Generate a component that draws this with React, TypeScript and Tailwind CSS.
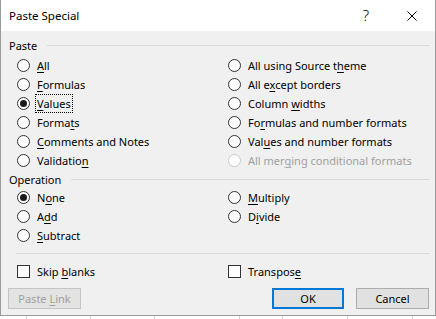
import React from "react";

type Row = { pre: string; key: string; post: string; checked?: boolean; disabled?: boolean; focus?: boolean };

function Label({ pre, k, post }: { pre: string; k: string; post: string }) {
  return (
    <span className="whitespace-pre">
      {pre}
      <span className="underline decoration-1 underline-offset-[2px]">{k}</span>
      {post}
    </span>
  );
}

function Radio({ row }: { row: Row }) {
  return (
    <div className="flex items-center h-[19px]">
      <span
        className={`w-[13px] h-[13px] rounded-full border bg-white flex items-center justify-center shrink-0 ${
          row.disabled ? "border-[#cccccc]" : "border-[#333333]"
        }`}
      >
        {row.checked && <span className="w-[7px] h-[7px] rounded-full bg-[#1a1a1a]" />}
      </span>
      <span className={`ml-[7px] whitespace-nowrap ${row.disabled ? "text-[#a0a0a0]" : "text-black"}`}>
        {row.focus ? (
          <span className="outline-1 outline-dotted outline-black outline-offset-[1px]">
            <Label pre={row.pre} k={row.key} post={row.post} />
          </span>
        ) : (
          <Label pre={row.pre} k={row.key} post={row.post} />
        )}
      </span>
    </div>
  );
}

function Check({ pre, k, post }: { pre: string; k: string; post: string }) {
  return (
    <div className="flex items-center h-[19px]">
      <span className="w-[13px] h-[13px] border border-[#333333] bg-white shrink-0" />
      <span className="ml-[7px] whitespace-nowrap">
        <Label pre={pre} k={k} post={post} />
      </span>
    </div>
  );
}

function GroupHeader({ title, h }: { title: string; h: string }) {
  return (
    <div className={`flex items-center ${h}`}>
      <span>{title}</span>
      <span className="flex-1 ml-[10px] h-px bg-[#d9d9d9]" />
    </div>
  );
}

const pasteLeft: Row[] = [
  { pre: "", key: "A", post: "ll" },
  { pre: "", key: "F", post: "ormulas" },
  { pre: "", key: "V", post: "alues", checked: true, focus: true },
  { pre: "Forma", key: "t", post: "s" },
  { pre: "", key: "C", post: "omments and Notes" },
  { pre: "Validatio", key: "n", post: "" },
];

const pasteRight: Row[] = [
  { pre: "All using Source t", key: "h", post: "eme" },
  { pre: "All e", key: "x", post: "cept borders" },
  { pre: "Column ", key: "w", post: "idths" },
  { pre: "Fo", key: "r", post: "mulas and number formats" },
  { pre: "Val", key: "u", post: "es and number formats" },
  { pre: "All mer", key: "g", post: "ing conditional formats", disabled: true },
];

const opLeft: Row[] = [
  { pre: "N", key: "o", post: "ne", checked: true },
  { pre: "A", key: "d", post: "d" },
  { pre: "", key: "S", post: "ubtract" },
];

const opRight: Row[] = [
  { pre: "", key: "M", post: "ultiply" },
  { pre: "D", key: "i", post: "vide" },
];

export default function App() {
  return (
    <div className="w-[436px] h-[319px] bg-white text-[11px] leading-none text-black font-['Noto_Sans','Open_Sans',sans-serif] overflow-hidden">
      <div className="h-[316px] flex flex-col border-x border-b border-[#9a9a9a] bg-[#f0f0f0]">
        {/* title bar */}
        <div className="h-[31px] shrink-0 bg-white flex items-center">
          <span className="pl-2 flex-1 text-[11.5px]">Paste Special</span>
          <div className="w-[46px] h-full flex items-center justify-center text-[15px] font-light">?</div>
          <div className="w-[46px] h-full flex items-center justify-center">
            <svg width="10" height="10" viewBox="0 0 10 10" aria-hidden>
              <path d="M0.5 0.5 L9.5 9.5 M9.5 0.5 L0.5 9.5" stroke="#000" strokeWidth="1" />
            </svg>
          </div>
        </div>

        <div className="flex flex-col pt-[4px] pl-[8px] pr-[6px]">
          <GroupHeader title="Paste" h="h-[21px]" />
          <div className="grid grid-cols-[211px_1fr] pl-[8px]">
            <div>
              {pasteLeft.map((r) => (
                <Radio key={r.pre + r.key} row={r} />
              ))}
            </div>
            <div>
              {pasteRight.map((r) => (
                <Radio key={r.pre + r.key} row={r} />
              ))}
            </div>
          </div>

          <GroupHeader title="Operation" h="h-[18px]" />
          <div className="grid grid-cols-[211px_1fr] pl-[8px]">
            <div>
              {opLeft.map((r) => (
                <Radio key={r.pre + r.key} row={r} />
              ))}
            </div>
            <div>
              {opRight.map((r) => (
                <Radio key={r.pre + r.key} row={r} />
              ))}
            </div>
          </div>

          <div className="mt-[8px] ml-[7px] h-px bg-[#d9d9d9]" />

          <div className="mt-[8px] grid grid-cols-[211px_1fr] pl-[8px]">
            <Check pre="Skip " k="b" post="lanks" />
            <Check pre="Transpos" k="e" post="" />
          </div>

          <div className="mt-[7px] -ml-px flex justify-between">
            <div className="w-[73px] h-[21px] border border-[#c4c4c4] bg-[#e3e3e3] text-[#a0a0a0] flex items-center justify-center">
              <Label pre="Paste " k="L" post="ink" />
            </div>
            <div className="flex gap-[12px]">
              <div className="w-[72px] h-[21px] border-2 border-[#0078d7] bg-[#e1e1e1] flex items-center justify-center">
                <span>OK</span>
              </div>
              <div className="w-[73px] h-[21px] border border-[#adadad] bg-[#e1e1e1] flex items-center justify-center">
                <span>Cancel</span>
              </div>
            </div>
          </div>
        </div>
      </div>
      <div className="h-[3px] flex">
        <div className="w-[27px] border-r border-[#d4d4d4]" />
        <div className="w-[64px] border-r border-[#d4d4d4]" />
        <div className="w-[64px] border-r border-[#d4d4d4]" />
        <div className="w-[85px] border-r border-[#d4d4d4]" />
        <div className="w-[43px] border-r border-[#d4d4d4]" />
        <div className="w-[65px] border-r border-[#d4d4d4]" />
        <div className="w-[65px] border-r border-[#d4d4d4]" />
      </div>
    </div>
  );
}
